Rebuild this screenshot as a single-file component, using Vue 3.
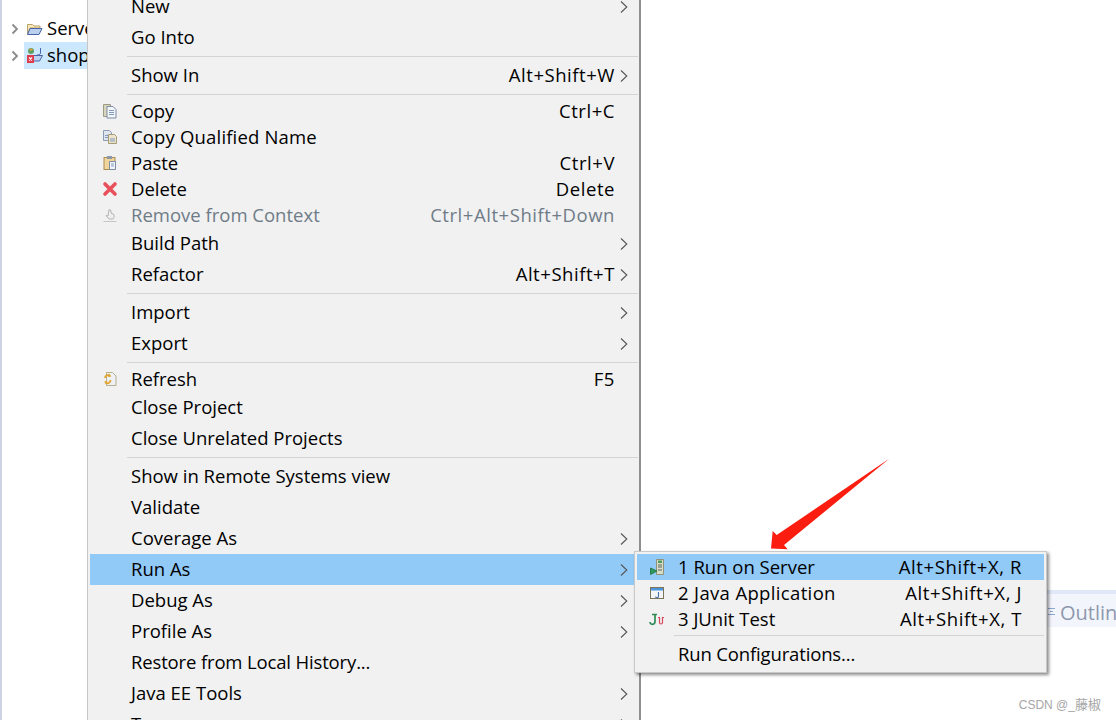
<script setup>
const rows = [
  { t: 'New', h: 31, arrow: true },
  { t: 'Go Into', h: 31 },
  { sep: true },
  { t: 'Show In', s: 'Alt+Shift+W', h: 31, arrow: true },
  { sep: true },
  { t: 'Copy', s: 'Ctrl+C', h: 26, icon: 'copy' },
  { t: 'Copy Qualified Name', h: 26, icon: 'qual', wide: true },
  { t: 'Paste', s: 'Ctrl+V', h: 26, icon: 'paste' },
  { t: 'Delete', s: 'Delete', h: 26, icon: 'del' },
  { t: 'Remove from Context', s: 'Ctrl+Alt+Shift+Down', h: 26, icon: 'rem', off: true },
  { t: 'Build Path', h: 31, arrow: true },
  { t: 'Refactor', s: 'Alt+Shift+T', h: 31, arrow: true },
  { sep: true },
  { t: 'Import', h: 31, arrow: true },
  { t: 'Export', h: 31, arrow: true },
  { sep: true },
  { t: 'Refresh', s: 'F5', h: 26, icon: 'refresh' },
  { t: 'Close Project', h: 31 },
  { t: 'Close Unrelated Projects', h: 31 },
  { sep: true },
  { t: 'Show in Remote Systems view', h: 31 },
  { t: 'Validate', h: 31 },
  { t: 'Coverage As', h: 31, arrow: true },
  { t: 'Run As', h: 31, arrow: true, on: true },
  { t: 'Debug As', h: 31, arrow: true },
  { t: 'Profile As', h: 31, arrow: true },
  { t: 'Restore from Local History...', h: 31, tight: true },
  { t: 'Java EE Tools', h: 31, arrow: true },
  { t: 'Team', h: 31, arrow: true },
]
const subs = [
  { t: '1 Run on Server', s: 'Alt+Shift+X, R', icon: 'server', on: true },
  { t: '2 Java Application', s: 'Alt+Shift+X, J', icon: 'java', wide: true },
  { t: '3 JUnit Test', s: 'Alt+Shift+X, T', icon: 'junit' },
]
</script>

<template>
  <div class="page">
    <aside class="tree">
      <div class="node">
        <svg class="chev" width="8" height="12" viewBox="0 0 8 12"><path d="M1.5 1.5 6 6l-4.500 4.500" /></svg>
        <span class="pick">
          <svg width="17" height="14" viewBox="0 0 17 14" class="nodeicon">
            <path d="M1.500 2.500h5l1.500 1.500h6v2H4L1.500 12z" fill="#fbe9b8" stroke="#b9a06a" />
            <path d="M4 6.500h12L13 12.500H1.500z" fill="#b9d0ef" stroke="#4a64a8" />
          </svg>
          <span class="nodetext">Serve</span>
        </span>
      </div>
      <div class="node">
        <svg class="chev" width="8" height="12" viewBox="0 0 8 12"><path d="M1.5 1.5 6 6l-4.500 4.500" /></svg>
        <span class="pick sel">
          <svg width="17" height="18" viewBox="0 0 17 18" class="nodeicon">
            <circle cx="5" cy="4" r="3" fill="#5d9f63" />
            <path d="M3 2.500a3 3 0 0 1 4 0L5 4z" fill="#d9a23c" />
            <path d="M14.500 1v5a2 2 0 0 1-3 1.500" fill="none" stroke="#4a64a8" />
            <path d="M7 8.500h9.500L13.500 14H7z" fill="#b9d0ef" stroke="#4a64a8" />
            <rect x="1" y="8" width="7" height="8" fill="#dc3c4c" />
            <path d="M3 10.500l3 3m0-3-3 3" stroke="#fff" stroke-width="1.200" />
          </svg>
          <span class="nodetext">shop</span>
        </span>
      </div>
    </aside>

    <nav class="menu">
      <template v-for="(r, i) in rows" :key="i">
        <div v-if="r.sep" class="sep"><i></i></div>
        <div v-else class="row" :class="{ on: r.on, off: r.off, tall: r.h === 31 }">
          <span class="gut">
            <svg v-if="r.icon === 'copy'" width="16" height="16" viewBox="0 0 16 16">
              <path d="M1.500 1.500h7v12h-7z" fill="#d8d4bd" stroke="#9c9a84" />
              <path d="M5 3.500h6l3 3v8.500H5z" fill="#f4f6fa" stroke="#7b8ca6" />
              <path d="M7 7.500h5M7 9.500h5M7 11.500h5" stroke="#7f99bd" />
            </svg>
            <svg v-else-if="r.icon === 'qual'" width="16" height="16" viewBox="0 0 16 16">
              <path d="M1.500 1.500h6l2 2v8h-8z" fill="#dfe5ee" stroke="#8c9bb3" />
              <path d="M6.500 5.500h6l2 2v7h-8z" fill="#ece5cc" stroke="#a69b76" />
              <path d="M3 6.500h3M3 8.500h3M8 10h5M8 12h5" stroke="#7f99bd" />
            </svg>
            <svg v-else-if="r.icon === 'paste'" width="16" height="16" viewBox="0 0 16 16">
              <rect x="2" y="2.500" width="11" height="12" fill="#f0d49a" stroke="#a98c52" />
              <rect x="5" y="1" width="5" height="3" fill="#8d98a8" />
              <path d="M7.500 6.500h6v8h-6z" fill="#f5f7fb" stroke="#7b8ca6" />
              <path d="M9 9h3M9 11h3" stroke="#7f99bd" />
            </svg>
            <svg v-else-if="r.icon === 'del'" width="16" height="16" viewBox="0 0 16 16">
              <path d="M3 3l10 10M13 3 3 13" stroke="#e8505c" stroke-width="3.600" stroke-linecap="round" />
            </svg>
            <svg v-else-if="r.icon === 'rem'" width="16" height="16" viewBox="0 0 16 16">
              <path d="M1.500 14.500h13" stroke="#c6c6c6" />
              <path d="M7 2.500l2 1v2.500l3 1.500v3l-1 1.500H7L4 8.500l2 .5z" fill="#efefef" stroke="#b4b4b4" />
            </svg>
            <svg v-else-if="r.icon === 'refresh'" width="16" height="16" viewBox="0 0 16 16">
              <path d="M4.500 1.500h6l3.500 3.500v9.500H4.500z" fill="#eef1f5" stroke="#b6ae8c" />
              <path d="M3 7a3 3 0 0 1 5-2M8.500 9a3 3 0 0 1-5 2.500" fill="none" stroke="#e0a52e" stroke-width="1.800" />
              <path d="M7 2.500l2.500 3-3.500.5zM4.500 13.500 2 10.500l3.500-.5z" fill="#e0a52e" />
            </svg>
          </span>
          <span class="label" :class="{ wide: r.wide, tight: r.tight }">{{ r.t }}</span>
          <span v-if="r.s" class="keys">{{ r.s }}</span>
          <span class="more">
            <svg v-if="r.arrow" width="8" height="12" viewBox="0 0 8 12"><path d="M1 .5 6.800 6 1 11.500" /></svg>
          </span>
        </div>
      </template>
    </nav>

    <main class="editor"></main>

    <div class="outline">
      <svg width="7" height="12" viewBox="0 0 7 12"><path d="M0 2.500h7M2 5.500h3M0 8.500h7" stroke="#8fa6cf" /></svg>
      <span>Outline</span>
    </div>

    <div class="submenu">
      <div v-for="s in subs" :key="s.t" class="subrow" :class="{ on: s.on }">
        <span class="subgut">
          <svg v-if="s.icon === 'server'" width="16" height="16" viewBox="0 0 16 16">
            <path d="M7.500 .5h7v15h-7z" fill="#d9dcc8" stroke="#8f9277" />
            <path d="M9 6h4M9 8h4M9 11h4" stroke="#5d6a58" />
            <rect x="9" y="1.500" width="4" height="2.500" fill="#4f9a5a" />
            <path d="M1.500 9l6.500 3-6.500 3.500z" fill="#2f9a57" stroke="#1f6f42" stroke-width=".8" />
          </svg>
          <svg v-else-if="s.icon === 'java'" width="16" height="16" viewBox="0 0 16 16">
            <rect x="1.500" y="2.500" width="13" height="11" fill="#f3f5f9" stroke="#7c7458" />
            <rect x="2" y="3" width="12" height="2.500" fill="#4a95dc" />
            <path d="M9.500 7v4a1.500 1.500 0 0 1-3 .5" fill="none" stroke="#4a6ea8" stroke-width="1.100" />
          </svg>
          <svg v-else-if="s.icon === 'junit'" width="16" height="14" viewBox="0 0 16 14">
            <path d="M3 2.500h5M6 2.500v7a2.500 2.500 0 0 1-5 .5" fill="none" stroke="#2f8a55" stroke-width="1.700" />
            <path d="M9 5.500h1.500v5a1.500 1.500 0 0 0 3 0v-5H15" fill="none" stroke="#d6475c" stroke-width="1.200" />
          </svg>
        </span>
        <span class="label" :class="{ wide2: s.wide }">{{ s.t }}</span>
        <span class="subkeys">{{ s.s }}</span>
      </div>
      <div class="subsep"><i></i></div>
      <div class="subrow last">
        <span class="subgut"></span>
        <span class="label tight">Run Configurations...</span>
      </div>
    </div>

    <svg class="pointer" width="130" height="100" viewBox="0 0 130 100">
      <path d="M124.500 .5 11.700 77 7.700 73 6 90.500 22.700 91.300 19 87z" fill="#fb1e10" />
    </svg>

    <div class="mark">CSDN @_<span class="markcjk">藤椒</span></div>
  </div>
</template>

<style>
html, body { margin: 0; background: #fff; }
</style>

<style scoped>
.page {
  position: relative;
  display: flex;
  width: 1116px;
  height: 720px;
  overflow: hidden;
  background: #fff;
  color: #000;
  font-family: "Open Sans", "Noto Sans", sans-serif;
  font-size: 18.5px;
}
.tree {
  box-sizing: border-box;
  width: 87px;
  padding: 15px 0 0 9px;
  border-left: 2px solid #cfd3e6;
}
.node {
  display: flex;
  align-items: center;
  height: 27px;
  white-space: nowrap;
}
.chev { margin-right: 5px; flex: none; }
.chev path { fill: none; stroke: #8a8a8a; stroke-width: 1.800; }
.pick {
  display: flex;
  align-items: center;
  gap: 4px;
  flex: 1;
  height: 27px;
  padding-left: 2px;
  overflow: hidden;
}
.pick.sel { background: #cce8ff; }
.nodeicon { flex: none; }
.nodetext { margin-top: -2px; }
.menu {
  box-sizing: border-box;
  flex: none;
  width: 554px;
  height: 760px;
  margin-top: -9px;
  padding: 0 1px 0 2px;
  background: #f1f1f1;
  border-left: 1px solid #c6c6c6;
  border-right: 2px solid #8e8e8e;
}
.row {
  display: flex;
  align-items: center;
  height: 26px;
  white-space: nowrap;
}
.row.tall { height: 31px; }
.row.on { background: #91c9f7; }
.row.off { color: #6f7c88; }
.gut {
  flex: none;
  display: flex;
  align-items: center;
  justify-content: center;
  width: 41px;
  padding-right: 1px;
  box-sizing: border-box;
}
.label { flex: 1; margin-top: -2px; }
.wide { letter-spacing: .17px; }
.wide2 { letter-spacing: .35px; }
.tight { letter-spacing: -.15px; }
.keys { flex: none; margin-top: -2px; letter-spacing: .55px; }
.more {
  flex: none;
  display: flex;
  align-items: center;
  justify-content: flex-start;
  width: 23px;
  padding-left: 5px;
  box-sizing: border-box;
}
.more path { fill: none; stroke: #555; stroke-width: 1.100; }
.sep { height: 7px; padding: 3px 0 3px 37px; box-sizing: border-box; }
.sep i { display: block; height: 1px; background: #d4d4d4; }
.editor { flex: 1; }
.outline {
  position: absolute;
  left: 1047px;
  top: 590px;
  display: flex;
  align-items: center;
  gap: 5px;
  box-sizing: border-box;
  width: 69px;
  height: 37px;
  padding-left: 1px;
  padding-top: 3px;
  background: #f3f5fc;
  border-top: 4px solid #dfe7f8;
  color: #8e98ac;
  font-size: 20px;
  white-space: nowrap;
  overflow: hidden;
}
.outline svg, .outline span { flex: none; }
.submenu {
  position: absolute;
  left: 634px;
  top: 551px;
  box-sizing: border-box;
  width: 413px;
  height: 122px;
  padding: 2px;
  background: #f1f1f1;
  border: 1px solid #c8c8c8;
  box-shadow: 2px 2px 3px rgba(0, 0, 0, .45);
}
.subrow {
  display: flex;
  align-items: center;
  height: 26px;
  white-space: nowrap;
}
.subrow.on { background: #91c9f7; }
.subrow.last { height: 31px; }
.subrow.last .label { margin-top: 0; }
.subgut {
  flex: none;
  display: flex;
  align-items: center;
  justify-content: center;
  width: 41px;
  padding-right: 1px;
  box-sizing: border-box;
}
.subkeys { flex: none; margin-top: -2px; padding-right: 22px; letter-spacing: .6px; }
.subsep { height: 6px; padding: 3px 0 2px 37px; box-sizing: border-box; }
.subsep i { display: block; height: 1px; background: #d4d4d4; }
.pointer { position: absolute; left: 765px; top: 458px; }
.mark {
  position: absolute;
  right: 15px;
  bottom: 7px;
  color: #a6a6a6;
  font: 12px "Liberation Sans", "Noto Sans CJK SC", sans-serif;
}
.markcjk { font-size: 13px; }
</style>
